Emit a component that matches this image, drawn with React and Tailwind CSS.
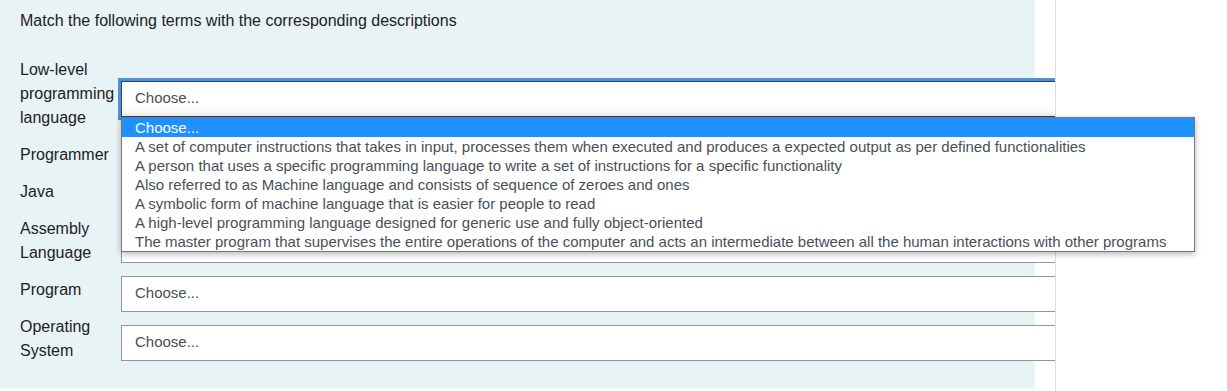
import React from 'react';

const rows = [
  { label: 'Low-level programming language', focused: true },
  { label: 'Programmer' },
  { label: 'Java' },
  { label: 'Assembly Language' },
  { label: 'Program' },
  { label: 'Operating System' },
];

const options = [
  'Choose...',
  'A set of computer instructions that takes in input, processes them when executed and produces a expected output as per defined functionalities',
  'A person that uses a specific programming language to write a set of instructions for a specific functionality',
  'Also referred to as Machine language and consists of sequence of zeroes and ones',
  'A symbolic form of machine language that is easier for people to read',
  'A high-level programming language designed for generic use and fully object-oriented',
  'The master program that supervises the entire operations of the computer and acts an intermediate between all the human interactions with other programs',
];

export default function App() {
  return (
    <div className="relative h-[391px] bg-white font-['Liberation_Sans',Arial,sans-serif] text-[#1d2125]">
      <div className="h-full w-[1056px] overflow-hidden border-r border-[#dcdcdc]">
        <div className="w-[1035px] bg-[#e7f3f5] px-5 pt-[9px] pb-[19px]">
          <div className="mb-[19px] text-base leading-6">Match the following terms with the corresponding descriptions</div>
          <div className="flex flex-col gap-px">
            {rows.map((row) => (
              <div key={row.label} className="flex items-center">
                <div className="w-[101px] shrink-0 py-[6px] text-base leading-6">{row.label}</div>
                <div
                  className={
                    row.focused
                      ? 'mt-[5px] -mb-[5px] flex h-9 w-[1000px] shrink-0 items-center border border-[#24466f] bg-gradient-to-b from-white from-70% to-[#f1f1f1] px-[13px] pb-px text-[15px] text-[#495057] ring-[3px] ring-[#4f8fd3]'
                      : 'mt-[4px] -mb-[4px] flex h-9 w-[1000px] shrink-0 items-center border border-[#8f959e] bg-white px-[13px] pb-px text-[15px] text-[#495057]'
                  }
                >
                  Choose...
                </div>
              </div>
            ))}
          </div>
        </div>
      </div>

      {/* open select list */}
      <div className="absolute left-[121px] top-[117px] w-[1074px] border border-[#767676] bg-white shadow-[0_2px_6px_rgba(0,0,0,0.3)]">
        {options.map((opt, i) => (
          <div
            key={i}
            className={
              i === 0
                ? 'h-[19px] whitespace-nowrap bg-[#1e90ff] px-[13px] text-[15px] leading-[19px] text-white'
                : 'h-[19px] whitespace-nowrap px-[13px] text-[15px] leading-[19px] text-[#495057]'
            }
          >
            {opt}
          </div>
        ))}
      </div>
    </div>
  );
}
